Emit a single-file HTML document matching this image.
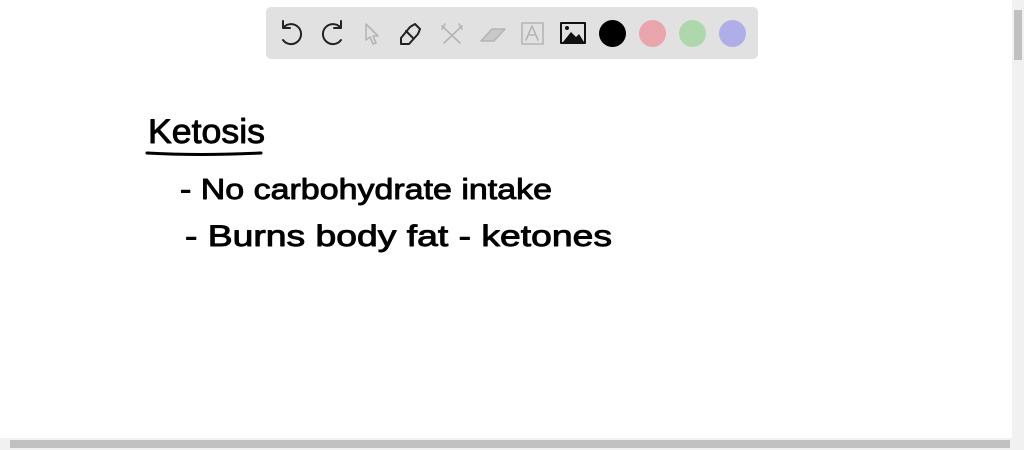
<!DOCTYPE html>
<html><head><style>
html,body{margin:0;padding:0;width:1024px;height:450px;overflow:hidden;background:#fff;position:relative;font-family:"Liberation Sans",sans-serif}
.tb{position:absolute;left:266px;top:7px;width:492px;height:52px;background:#e1e1e1;border-radius:5px}
.c{position:absolute;top:20px;width:27px;height:27px;border-radius:50%}
.vs{position:absolute;right:0;top:0;width:12px;height:438px;background:#f1f1f1}
.vt{position:absolute;right:2px;top:10px;width:8px;height:50px;background:#c1c1c1}
.hs{position:absolute;left:0;bottom:0;width:1024px;height:12px;background:#f1f1f1}
.ht{position:absolute;left:10px;bottom:2px;width:1000px;height:8px;background:#c1c1c1}
</style></head><body>
<div class="tb"></div>
<svg width="1024" height="450" style="position:absolute;left:0;top:0" fill="none" stroke-linecap="round" stroke-linejoin="round">
<g stroke="#222" stroke-width="2">
<path d="M284 27 A10 10 0 1 1 283 40"/><path d="M283 21 L283 28 L290 28"/>
<path d="M340 27 A10 10 0 1 0 341 40"/><path d="M341 21 L341 28 L334 28"/>
<path d="M401 38 L410 27 L415 24 L420 29 L418 34 L409 44 L401 44 Z"/><path d="M406 31 L413 38"/>
</g>
<g stroke="#b5b5b5" stroke-width="1.6">
<path d="M366 24 L378 36 L373 36 L376 43 L373 44 L370 37 L366 40 Z"/>
<path d="M442 26 L460 43 M462 26 L444 43 M445 24 l-3 5 M459 24 l3 5"/>
<path d="M481 41 L492 29 L505 29 L494 41 Z" fill="#c8c8c8"/>
<rect x="522" y="23" width="21" height="21"/><path d="M526 40 L532 26 L538 40 M528 35 h8"/>
</g>
<rect x="561" y="23" width="24" height="20" stroke="#111" stroke-width="2"/>
<path d="M563 42 L571 32 L576 37 L579 34 L584 42 Z" fill="#111"/><circle cx="567" cy="28" r="2" fill="#111"/>
<g fill="#000" stroke="#000" stroke-width="0.9" font-family="Liberation Sans Narrow, Liberation Sans, sans-serif">
<text x="148" y="143" font-size="34" textLength="117" lengthAdjust="spacingAndGlyphs">Ketosis</text>
<text x="180" y="199" font-size="29" textLength="372" lengthAdjust="spacingAndGlyphs">- No carbohydrate intake</text>
<text x="185" y="246" font-size="30" textLength="427" lengthAdjust="spacingAndGlyphs">- Burns body fat - ketones</text>
</g>
<path d="M147 153 Q200 156 261 153" stroke="#000" stroke-width="3"/>
</svg>
<div class="c" style="left:599px;background:#000"></div>
<div class="c" style="left:639px;background:#e8a5ac"></div>
<div class="c" style="left:679px;background:#aed8ab"></div>
<div class="c" style="left:719px;background:#b0aee8"></div>
<div class="vs"><div class="vt"></div></div>
<div class="hs"><div class="ht"></div></div>
</body></html>
